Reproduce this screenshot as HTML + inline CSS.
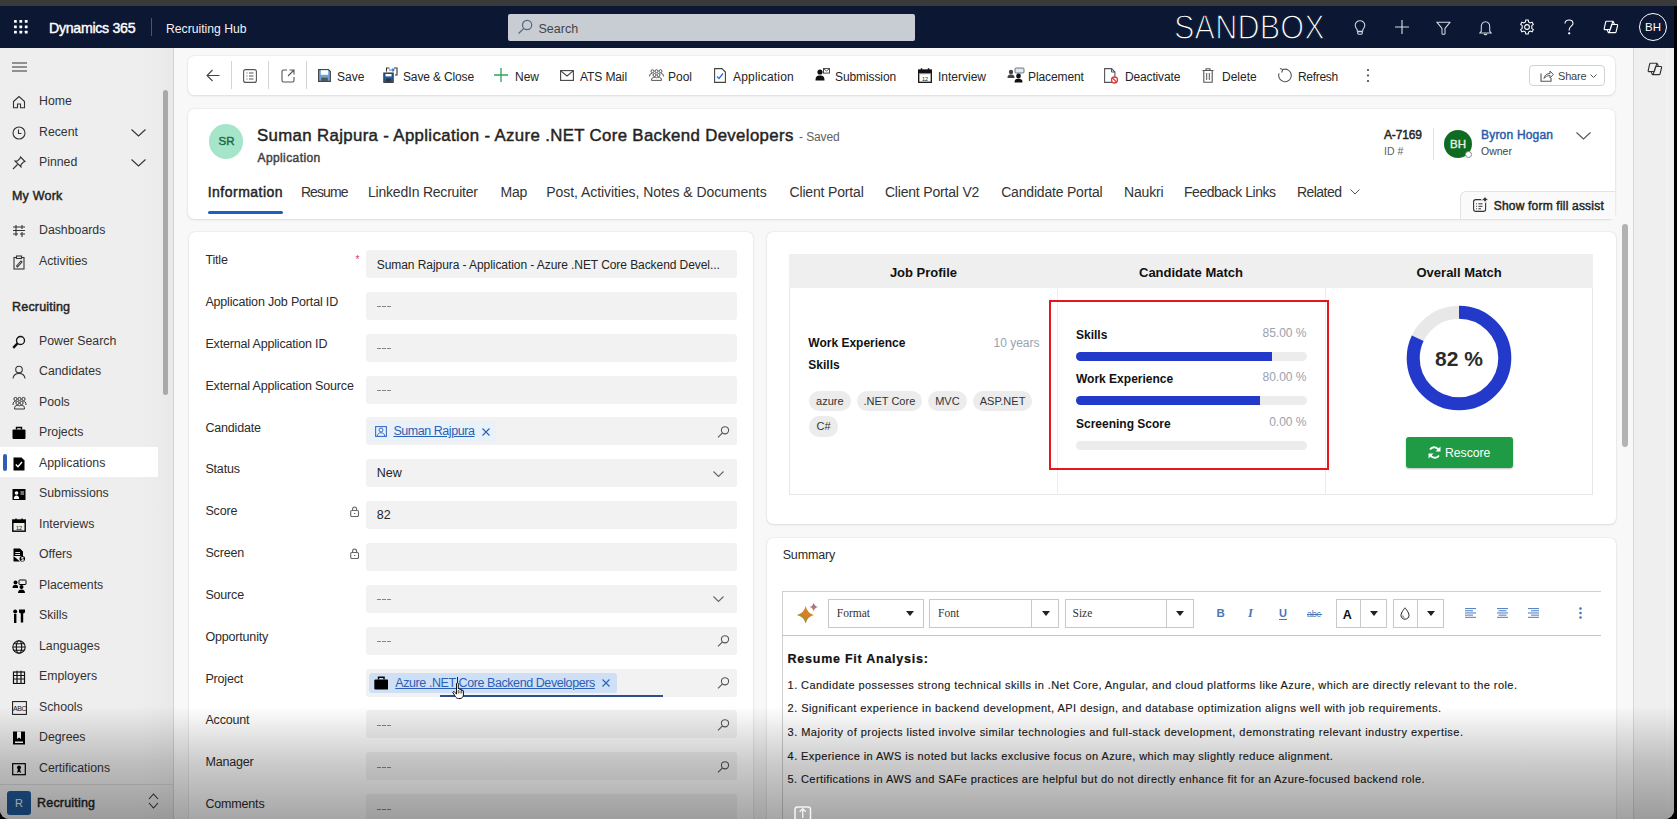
<!DOCTYPE html>
<html><head><meta charset="utf-8">
<style>
*{box-sizing:border-box;margin:0;padding:0}
html,body{width:1677px;height:819px;overflow:hidden;background:#000}
body{font-family:"Liberation Sans",sans-serif;color:#242424;position:relative}
.a{position:absolute;white-space:nowrap}
#screen{position:absolute;left:0;top:0;width:1674px;height:819px;background:#f8f8f8;overflow:hidden;border-radius:0 0 9px 9px}
#topstrip{position:absolute;left:0;top:0;width:1677px;height:6px;background:#3a3a3a}
#hdr{position:absolute;left:0;top:6px;width:1674px;height:42px;background:#0b1733}
#side{position:absolute;left:0;top:48px;width:174px;height:771px;background:linear-gradient(to right,#eeeeee 0,#eeeeee 140px,#e9e9e9 173px);border-right:1px solid #d2d2d2}
#rpanel{position:absolute;left:1633px;top:48px;width:41px;height:771px;background:#efefef;border-left:1px solid #d8d8d8}
.card{position:absolute;background:#fff;border-radius:6px;box-shadow:0 0 1.5px rgba(0,0,0,.16),0 1px 2.5px rgba(0,0,0,.08)}
#shade{position:absolute;left:0;top:0;width:1677px;height:819px;pointer-events:none;
 background:linear-gradient(to bottom,rgba(0,0,0,0) 0px,rgba(0,0,0,0) 706px,rgba(0,0,0,.10) 734px,rgba(0,0,0,.20) 762px,rgba(0,0,0,.35) 819px)}

</style></head><body>
<div id="screen">
<div id="hdr">
<svg class="a" style="left:13.6px;top:14.2px" width="14" height="14" viewBox="0 0 14 14" fill="#fff"><rect x="0" y="0" width="2.8" height="2.8" rx="0.4"/><rect x="5.4" y="0" width="2.8" height="2.8" rx="0.4"/><rect x="10.8" y="0" width="2.8" height="2.8" rx="0.4"/><rect x="0" y="5.4" width="2.8" height="2.8" rx="0.4"/><rect x="5.4" y="5.4" width="2.8" height="2.8" rx="0.4"/><rect x="10.8" y="5.4" width="2.8" height="2.8" rx="0.4"/><rect x="0" y="10.8" width="2.8" height="2.8" rx="0.4"/><rect x="5.4" y="10.8" width="2.8" height="2.8" rx="0.4"/><rect x="10.8" y="10.8" width="2.8" height="2.8" rx="0.4"/></svg>
<div class="a" style="left:49px;top:13.8px;font-size:14.2px;color:#fff;-webkit-text-stroke:0.4px #fff;letter-spacing:-0.3px">Dynamics 365</div>
<div class="a" style="left:151px;top:12px;width:1px;height:18px;background:#4a5570"></div>
<div class="a" style="left:166px;top:15.8px;font-size:12.2px;color:#f2f2f2">Recruiting Hub</div>
<div class="a" style="left:508px;top:8px;width:407px;height:27px;background:#c8ccd3;border-radius:2px"></div>
<svg class="a" style="left:517px;top:13px" width="16" height="16" viewBox="0 0 16 16" fill="none" stroke="#55647f" stroke-width="1.2"><circle cx="10.1" cy="6" r="4.6"/><path d="M6.8 9.3 L1.6 14.5"/></svg>
<div class="a" style="left:538.5px;top:15.5px;font-size:12.5px;color:#444">Search</div>
<div class="a" style="left:1173.5px;top:1.5px;font-size:34.6px;color:#fff;transform:scaleX(0.885);transform-origin:0 0;-webkit-text-stroke:1.3px #0b1733;letter-spacing:0.2px">SANDBOX</div>
<svg class="a" style="left:1354px;top:14px" width="12" height="15" viewBox="0 0 12 15" fill="none" stroke="#d6dae2" stroke-width="1.05"><path d="M6 0.8 C3.2 0.8 1.2 2.8 1.2 5.3 C1.2 7.4 2.6 8.6 3.3 10 V11.2 H8.7 V10 C9.4 8.6 10.8 7.4 10.8 5.3 C10.8 2.8 8.8 0.8 6 0.8Z"/><rect x="3.6" y="11.6" width="4.8" height="2.6" rx="1.2"/></svg>
<svg class="a" style="left:1395px;top:14.3px" width="14" height="14" viewBox="0 0 14 14" stroke="#d6dae2" stroke-width="1.15"><path d="M7 0 V14 M0 7 H14"/></svg>
<svg class="a" style="left:1436px;top:14.5px" width="15" height="14" viewBox="0 0 15 14" fill="none" stroke="#d6dae2" stroke-width="1.05" stroke-linejoin="round"><path d="M0.8 1.2 H14.2 L9 7.4 V12.6 Q9 13.3 8.3 13.3 H6.7 Q6 13.3 6 12.6 V7.4 Z"/></svg>
<svg class="a" style="left:1479px;top:14.5px" width="13" height="15" viewBox="0 0 13 15" fill="none" stroke="#d6dae2" stroke-width="1.05"><path d="M6.5 0.8 C4 0.8 2.3 2.8 2.3 5.4 V10.2 L0.8 12 H12.2 L10.7 10.2 V5.4 C10.7 2.8 9 0.8 6.5 0.8Z"/><path d="M5 12.8 C5.3 13.9 7.7 13.9 8 12.8"/></svg>
<svg class="a" style="left:1519px;top:13px" width="16" height="16" viewBox="0 0 16 16" fill="none" stroke="#fff" stroke-width="1.1"><circle cx="8" cy="8" r="2.4"/><path d="M6.8 1 H9.2 L9.6 3 L11.2 3.9 L13.1 3.2 L14.3 5.3 L12.8 6.7 V8.3 V9.3 L14.3 10.7 L13.1 12.8 L11.2 12.1 L9.6 13 L9.2 15 H6.8 L6.4 13 L4.8 12.1 L2.9 12.8 L1.7 10.7 L3.2 9.3 V6.7 L1.7 5.3 L2.9 3.2 L4.8 3.9 L6.4 3 Z"/></svg>
<svg class="a" style="left:1563px;top:13px" width="12" height="16" viewBox="0 0 12 16" fill="none" stroke="#fff" stroke-width="1.1"><path d="M2 4.5 C2 2.4 3.8 1 6 1 C8.2 1 10 2.4 10 4.5 C10 7 6.2 7.5 6.2 10.5 V11.5"/><circle cx="6.2" cy="14.3" r="0.6" fill="#fff"/></svg>
<svg class="a" style="left:1600px;top:9.8px" width="22" height="22" viewBox="0 0 22 22" fill="none" stroke="#fff" stroke-width="1.15" stroke-linejoin="round"><path d="M6.3 5.2 H13 L14.6 8.5 H17 Q17.8 8.7 17.6 9.6 L16 16 Q15.8 16.6 15 16.6 H8.3 L7.2 13.6 H4.8 Q4 13.5 4.2 12.6 L5.7 5.9 Q5.9 5.2 6.3 5.2Z M12.9 5.4 L10.3 13.5 H7.2 M14.6 8.5 H11.7 L9.1 16.5"/></svg>
<div class="a" style="left:1639px;top:7px;width:28px;height:28px;border:1.3px solid #fff;border-radius:50%;color:#fff;font-size:11.5px;text-align:center;line-height:26px">BH</div>
</div>
<div id="side">
<svg class="a" style="left:12px;top:14px" width="15" height="10" viewBox="0 0 15 10" stroke="#333" stroke-width="1.1"><path d="M0 1 H15 M0 5 H15 M0 9 H15"/></svg>
<div class="a" style="left:163px;top:42px;width:5px;height:305px;background:#a9a9a9;border-radius:3px"></div>
<div class="a" style="left:12px;top:47px"><svg width="14" height="14" viewBox="0 0 14 14" fill="none" stroke="#333" stroke-width="1.1"><path d="M1.5 6.5 L7 1.5 L12.5 6.5 V12.8 H8.5 V9 H5.5 V12.8 H1.5Z"/></svg></div>
<div class="a" style="left:39px;top:46px;font-size:12.3px;color:#333">Home</div>
<div class="a" style="left:12px;top:78px"><svg width="14" height="14" viewBox="0 0 14 14" fill="none" stroke="#333" stroke-width="1.1"><circle cx="7" cy="7" r="6"/><path d="M6.5 3.5 V7.5 H9.5"/></svg></div>
<div class="a" style="left:39px;top:77px;font-size:12.3px;color:#333">Recent</div>
<svg class="a" style="left:131px;top:81px" width="15" height="8" viewBox="0 0 15 8" fill="none" stroke="#333" stroke-width="1.1"><path d="M0.5 0.5 L7.5 7 L14.5 0.5"/></svg>
<div class="a" style="left:12px;top:108px"><svg width="14" height="14" viewBox="0 0 14 14" fill="none" stroke="#333" stroke-width="1.1"><path d="M8.5 1 L13 5.5 L11.5 6 L9 8.5 L9 11 L3 5 L5.5 5 L8 2.5Z M5.5 8.5 L1 13"/></svg></div>
<div class="a" style="left:39px;top:107px;font-size:12.3px;color:#333">Pinned</div>
<svg class="a" style="left:131px;top:111px" width="15" height="8" viewBox="0 0 15 8" fill="none" stroke="#333" stroke-width="1.1"><path d="M0.5 0.5 L7.5 7 L14.5 0.5"/></svg>
<div class="a" style="left:12px;top:141px;font-size:12.5px;-webkit-text-stroke:0.45px #242424;color:#242424;letter-spacing:0.2px">My Work</div>
<div class="a" style="left:12px;top:176px"><svg width="14" height="14" viewBox="0 0 14 14" fill="none" stroke="#333" stroke-width="1.1"><path d="M1 3 H13 M1 6.5 H13 M1 10 H6 M8 10 H13 M4 1 V12 M10 1 V5 M10 8 V13"/></svg></div>
<div class="a" style="left:39px;top:175px;font-size:12.3px;color:#333">Dashboards</div>
<div class="a" style="left:12px;top:207px"><svg width="14" height="15" viewBox="0 0 14 15" fill="none" stroke="#333" stroke-width="1.1"><rect x="2" y="2.5" width="10" height="11.5"/><rect x="4.5" y="1" width="5" height="2.5" fill="#eee"/><path d="M4.5 11 L9 6 L10 7 L5.5 12Z"/></svg></div>
<div class="a" style="left:39px;top:206px;font-size:12.3px;color:#333">Activities</div>
<div class="a" style="left:12px;top:252px;font-size:12.5px;-webkit-text-stroke:0.45px #242424;color:#242424;letter-spacing:0.2px">Recruiting</div>
<div class="a" style="left:12px;top:287px"><svg width="14" height="14" viewBox="0 0 14 14" fill="none" stroke="#111" stroke-width="1.3"><circle cx="8.5" cy="5.5" r="4"/><path d="M5.8 8.2 L1.2 12.8" stroke-width="2.4"/></svg></div>
<div class="a" style="left:39px;top:286px;font-size:12.3px;color:#333">Power Search</div>
<div class="a" style="left:12px;top:317px"><svg width="14" height="14" viewBox="0 0 14 14" fill="none" stroke="#333" stroke-width="1.1"><circle cx="7" cy="4.5" r="3.3"/><path d="M1 13.5 C1.5 9.5 4 8.5 7 8.5 C10 8.5 12.5 9.5 13 13.5"/></svg></div>
<div class="a" style="left:39px;top:316px;font-size:12.3px;color:#333">Candidates</div>
<div class="a" style="left:12px;top:348px"><svg width="15" height="14" viewBox="0 0 15 14" fill="none" stroke="#333" stroke-width="1"><circle cx="3.5" cy="3" r="1.6"/><circle cx="7.5" cy="3" r="1.6"/><circle cx="11.5" cy="3" r="1.6"/><circle cx="5.5" cy="7" r="1.6"/><circle cx="9.5" cy="7" r="1.6"/><path d="M1 9 C1 6 2 5.5 3.5 5.5 M14 9 C14 6 13 5.5 11.5 5.5 M2.5 13 C2.5 10 3.5 9.5 5.5 9.5 C7.5 9.5 7.5 10 7.5 10 C7.5 10 7.5 9.5 9.5 9.5 C11.5 9.5 12.5 10 12.5 13Z"/></svg></div>
<div class="a" style="left:39px;top:347px;font-size:12.3px;color:#333">Pools</div>
<div class="a" style="left:12px;top:378px"><svg width="14" height="14" viewBox="0 0 14 14"><path d="M4.5 3.5 V1.5 H9.5 V3.5" fill="none" stroke="#000" stroke-width="1.4"/><rect x="0.5" y="3.5" width="13" height="9.5" rx="1" fill="#000"/></svg></div>
<div class="a" style="left:39px;top:377px;font-size:12.3px;color:#333">Projects</div>
<div class="a" style="left:0;top:398.8px;width:158px;height:30.5px;background:#fff"></div>
<div class="a" style="left:3px;top:406px;width:3.5px;height:17px;background:#2f5fb3;border-radius:2px"></div>
<div class="a" style="left:12px;top:409px"><svg width="14" height="14" viewBox="0 0 14 14"><path d="M1.5 0.5 H9.5 L12.5 3.5 V13.5 H1.5Z" fill="#000"/><path d="M3.8 7.5 L6 9.8 L10 5" fill="none" stroke="#fff" stroke-width="1.4"/></svg></div>
<div class="a" style="left:39px;top:408px;font-size:12.3px;color:#333">Applications</div>
<div class="a" style="left:12px;top:439px"><svg width="14" height="13" viewBox="0 0 14 13"><rect x="0.5" y="1" width="13" height="11" fill="#000"/><circle cx="4.5" cy="5" r="1.8" fill="#fff"/><path d="M1.8 11 C2 8 3 7.5 4.5 7.5 C6 7.5 7 8 7.2 11Z" fill="#fff"/><path d="M8.5 4 H12 M8.5 6 H12" stroke="#fff" stroke-width="0.9"/></svg></div>
<div class="a" style="left:39px;top:438px;font-size:12.3px;color:#333">Submissions</div>
<div class="a" style="left:12px;top:470px"><svg width="14" height="14" viewBox="0 0 14 14"><rect x="0.8" y="2" width="12.4" height="11.2" fill="none" stroke="#000" stroke-width="1.4"/><rect x="0.8" y="2" width="12.4" height="3" fill="#000"/><path d="M4 0.5 V2.5 M10 0.5 V2.5" stroke="#000" stroke-width="1.4"/><text x="7" y="11.8" font-size="5.5" text-anchor="middle" font-family="Liberation Sans" fill="#000">12</text></svg></div>
<div class="a" style="left:39px;top:469px;font-size:12.3px;color:#333">Interviews</div>
<div class="a" style="left:12px;top:500px"><svg width="14" height="14" viewBox="0 0 14 14"><path d="M1.5 0.5 H8 L11 3.5 V8 H1.5Z M1.5 8 V13.5 H8" fill="#000"/><path d="M3.3 4.5 H8 M3.3 6.5 H8" stroke="#fff" stroke-width="0.9"/><circle cx="10.3" cy="10.8" r="2.8" fill="#000"/><text x="10.3" y="12.8" font-size="5" text-anchor="middle" font-family="Liberation Sans" font-weight="700" fill="#fff">$</text></svg></div>
<div class="a" style="left:39px;top:499px;font-size:12.3px;color:#333">Offers</div>
<div class="a" style="left:12px;top:531px"><svg width="15" height="14" viewBox="0 0 15 14" fill="#000"><circle cx="3.5" cy="3.5" r="2"/><path d="M0.5 9 C0.5 6.5 1.5 6 3.5 6 C5.5 6 6 6.5 6 7.5 V9Z"/><rect x="7" y="1" width="7" height="4.5" rx="0.5" fill="none" stroke="#000"/><circle cx="9.5" cy="8" r="2"/><path d="M6 14 C6 11.5 7.5 10.5 9.5 10.5 C11.5 10.5 13 11.5 13 14Z"/></svg></div>
<div class="a" style="left:39px;top:530px;font-size:12.3px;color:#333">Placements</div>
<div class="a" style="left:12px;top:561px"><svg width="14" height="14" viewBox="0 0 14 14" fill="#000"><rect x="2" y="5" width="2.4" height="9"/><circle cx="3.2" cy="2.5" r="2"/><path d="M7 0.5 H13 V3.5 L11.2 4.5 V13.5 H8.8 V4.5 L7 3.5Z"/></svg></div>
<div class="a" style="left:39px;top:560px;font-size:12.3px;color:#333">Skills</div>
<div class="a" style="left:12px;top:592px"><svg width="14" height="14" viewBox="0 0 14 14" fill="none" stroke="#111" stroke-width="1.1"><circle cx="7" cy="7" r="6.2"/><ellipse cx="7" cy="7" rx="2.7" ry="6.2"/><path d="M0.8 7 H13.2 M1.8 3.8 H12.2 M1.8 10.2 H12.2"/></svg></div>
<div class="a" style="left:39px;top:591px;font-size:12.3px;color:#333">Languages</div>
<div class="a" style="left:12px;top:622px"><svg width="14" height="14" viewBox="0 0 14 14" fill="none" stroke="#111" stroke-width="1.2"><rect x="1.5" y="2" width="11" height="11.5"/><path d="M5 0.8 V13.5 M9 0.8 V13.5 M1.5 5.5 H12.5 M1.5 9 H12.5"/></svg></div>
<div class="a" style="left:39px;top:621px;font-size:12.3px;color:#333">Employers</div>
<div class="a" style="left:12px;top:653px"><svg width="15" height="14" viewBox="0 0 15 14"><rect x="0.6" y="0.6" width="13.8" height="12.8" fill="none" stroke="#111" stroke-width="1"/><text x="7.5" y="9.8" font-size="7" text-anchor="middle" font-family="Liberation Sans" fill="#111" letter-spacing="-0.4">ABC</text></svg></div>
<div class="a" style="left:39px;top:652px;font-size:12.3px;color:#333">Schools</div>
<div class="a" style="left:12px;top:683px"><svg width="14" height="14" viewBox="0 0 14 14"><path d="M1 0.5 H13 V13.5 H1Z" fill="#000"/><path d="M5 0.5 V8 L7 6.5 L9 8 V0.5Z" fill="#fff"/><rect x="3" y="10.5" width="8" height="1.5" fill="#fff"/></svg></div>
<div class="a" style="left:39px;top:682px;font-size:12.3px;color:#333">Degrees</div>
<div class="a" style="left:12px;top:714px"><svg width="14" height="13" viewBox="0 0 14 13"><rect x="0.7" y="0.7" width="12.6" height="11" fill="none" stroke="#000" stroke-width="1.2"/><circle cx="7" cy="4.5" r="2" fill="#000"/><path d="M5 10 L6 6 H8 L9 10 L7 8.8Z" fill="#000"/></svg></div>
<div class="a" style="left:39px;top:713px;font-size:12.3px;color:#333">Certifications</div>
<div class="a" style="left:0;top:736px;width:173px;height:1px;background:#d6d6d6"></div>
<div class="a" style="left:7px;top:743px;width:24px;height:24px;background:#205a9a;border-radius:3px;color:#e8eef7;font-size:11px;text-align:center;line-height:24px">R</div>
<div class="a" style="left:37px;top:748px;font-size:12.5px;-webkit-text-stroke:0.45px #242424;color:#242424;letter-spacing:0.2px">Recruiting</div>
<svg class="a" style="left:148px;top:745px" width="11" height="16" viewBox="0 0 11 16" fill="none" stroke="#333" stroke-width="1.1"><path d="M1 6 L5.5 1 L10 6 M1 10 L5.5 15 L10 10"/></svg>
</div>
<div id="rpanel"></div>
<div class="card" style="left:188px;top:56px;width:1427px;height:39px"></div>
<svg class="a" style="left:206px;top:69px" width="14" height="13" viewBox="0 0 14 13"><path d="M13.5 6.5 H1.5 M6.5 1 L1 6.5 L6.5 12" fill="none" stroke="#444" stroke-width="1.1"/></svg>
<div class="a" style="left:231px;top:61px;width:1px;height:28px;background:#d4d4d4"></div>
<div class="a" style="left:268px;top:61px;width:1px;height:28px;background:#d4d4d4"></div>
<div class="a" style="left:306px;top:61px;width:1px;height:28px;background:#d4d4d4"></div>
<svg class="a" style="left:243px;top:69px" width="14" height="14" viewBox="0 0 14 14"><rect x="0.6" y="0.6" width="12.8" height="12.8" rx="2" fill="none" stroke="#555" stroke-width="1.1"/><path d="M3.5 4 H4.5 M6 4 H10.5 M3.5 7 H4.5 M6 7 H10.5 M3.5 10 H4.5 M6 10 H10.5" stroke="#555" stroke-width="1"/></svg>
<svg class="a" style="left:281px;top:69px" width="14" height="14" viewBox="0 0 14 14"><path d="M6 1 H2.5 C1.6 1 1 1.6 1 2.5 V11.5 C1 12.4 1.6 13 2.5 13 H11.5 C12.4 13 13 12.4 13 11.5 V8 M8.5 1 H13 V5.5 M13 1 L7 7" fill="none" stroke="#555" stroke-width="1.1"/></svg>
<svg class="a" style="left:318px;top:69px" width="13" height="13" viewBox="0 0 13 13"><path d="M0.6 0.6 H10.5 L12.4 2.5 V12.4 H0.6Z" fill="#6fa0d8" stroke="#444" stroke-width="1.1"/><rect x="2.8" y="1.2" width="7.4" height="4.6" fill="#fff"/><rect x="3.2" y="8.6" width="6.6" height="3.6" fill="#555"/></svg>
<div class="a" style="left:337px;top:69.96px;font-size:12px;color:#242424;font-weight:400;">Save</div>
<svg class="a" style="left:383px;top:67px" width="15" height="16" viewBox="0 0 15 16"><path d="M3.5 4.5 V1 H6.5 M11 1 H14 V8 H12" fill="none" stroke="#333" stroke-width="1.1"/><path d="M6 3 H11 M9.5 1.5 L11 3 L9.5 4.5" fill="none" stroke="#2f6fd0" stroke-width="1.1"/><rect x="0.8" y="6" width="9.4" height="9.4" fill="#1f5fa8" stroke="#333" stroke-width="1"/><rect x="2.5" y="7" width="6" height="2.4" fill="#fff"/><rect x="2.8" y="11.6" width="5.4" height="3" fill="#333"/></svg>
<div class="a" style="left:403px;top:69.96px;font-size:12px;color:#242424;font-weight:400;letter-spacing:-0.15px">Save &amp; Close</div>
<svg class="a" style="left:494px;top:68px" width="14" height="14" viewBox="0 0 14 14"><path d="M7 0 V14 M0 7 H14" stroke="#2aa55a" stroke-width="1.3"/></svg>
<div class="a" style="left:515px;top:69.96px;font-size:12px;color:#242424;font-weight:400;">New</div>
<svg class="a" style="left:560px;top:70px" width="14" height="11" viewBox="0 0 14 11"><rect x="0.6" y="0.6" width="12.8" height="9.8" fill="none" stroke="#444" stroke-width="1.1"/><path d="M0.8 0.8 L7 6 L13.2 0.8" fill="none" stroke="#444" stroke-width="1.1"/></svg>
<div class="a" style="left:580px;top:69.96px;font-size:12px;color:#242424;font-weight:400;letter-spacing:-0.1px">ATS Mail</div>
<svg class="a" style="left:649px;top:69px" width="15" height="12" viewBox="0 0 15 12"><g fill="none" stroke="#444" stroke-width="0.9"><circle cx="3.5" cy="2.2" r="1.5"/><circle cx="7.5" cy="2.2" r="1.5"/><circle cx="11.5" cy="2.2" r="1.5"/><path d="M0.6 7.5 C0.6 5 1.5 4.5 3.2 4.5 M14.4 7.5 C14.4 5 13.5 4.5 11.8 4.5"/><circle cx="5.5" cy="6" r="1.5"/><circle cx="9.5" cy="6" r="1.5"/><path d="M2.5 11.4 C2.5 9 3.5 8.3 5.5 8.3 C6.8 8.3 7.5 8.8 7.5 8.8 C7.5 8.8 8.2 8.3 9.5 8.3 C11.5 8.3 12.5 9 12.5 11.4Z"/></g></svg>
<div class="a" style="left:668px;top:69.96px;font-size:12px;color:#242424;font-weight:400;">Pool</div>
<svg class="a" style="left:714px;top:68px" width="12" height="15" viewBox="0 0 12 15"><path d="M0.6 0.6 H8 L11.4 4 V14.4 H0.6Z" fill="#fff" stroke="#444" stroke-width="1.1"/><path d="M3 8.5 L5 10.5 L9 5.5" fill="none" stroke="#2f6fd0" stroke-width="1.3"/></svg>
<div class="a" style="left:733px;top:69.96px;font-size:12px;color:#242424;font-weight:400;letter-spacing:0.2px">Application</div>
<svg class="a" style="left:815px;top:68px" width="15" height="13" viewBox="0 0 15 13"><circle cx="5" cy="4" r="2.6" fill="#111"/><path d="M0.5 12.5 C0.5 8.5 2 7.5 5 7.5 C8 7.5 9.5 8.5 9.5 12.5Z" fill="#111"/><rect x="8.5" y="0.6" width="6" height="4.5" fill="#fff" stroke="#333" stroke-width="0.9"/><path d="M8.7 0.9 L11.5 3 L14.3 0.9" fill="none" stroke="#333" stroke-width="0.8"/></svg>
<div class="a" style="left:835px;top:69.96px;font-size:12px;color:#242424;font-weight:400;letter-spacing:-0.1px">Submission</div>
<svg class="a" style="left:918px;top:68px" width="14" height="15" viewBox="0 0 14 15"><rect x="0.7" y="2" width="12.6" height="12.3" fill="#fff" stroke="#111" stroke-width="1.3"/><rect x="0.7" y="2" width="12.6" height="3.2" fill="#111"/><rect x="2" y="5.2" width="10" height="1" fill="#4a86d0"/><path d="M3.5 0.3 V3 M10.5 0.3 V3" stroke="#111" stroke-width="1.4"/><text x="7" y="12.6" font-size="5.5" text-anchor="middle" font-family="Liberation Sans" fill="#111">12</text></svg>
<div class="a" style="left:938px;top:69.96px;font-size:12px;color:#242424;font-weight:400;">Interview</div>
<svg class="a" style="left:1007px;top:67px" width="20" height="16" viewBox="0 0 20 16"><circle cx="4" cy="5" r="2.2" fill="#444"/><path d="M0.5 11 C0.5 8 2 7.5 4 7.5 C6 7.5 7.5 8 7.5 11Z" fill="#444"/><rect x="8" y="1" width="9" height="5" rx="1" fill="#dbe9f8" stroke="#555" stroke-width="0.8"/><circle cx="11.5" cy="9" r="2.4" fill="#111"/><path d="M7.5 15.5 C7.5 12.5 9 11.8 11.5 11.8 C14 11.8 15.5 12.5 15.5 15.5Z" fill="#111"/></svg>
<div class="a" style="left:1028px;top:69.96px;font-size:12px;color:#242424;font-weight:400;letter-spacing:-0.1px">Placement</div>
<svg class="a" style="left:1104px;top:68px" width="15" height="16" viewBox="0 0 15 16"><path d="M0.6 0.6 H7.5 L10.9 4 V14.4 H0.6Z" fill="#fff" stroke="#555" stroke-width="1.1"/><path d="M7.5 0.6 V4 H10.9" fill="none" stroke="#555" stroke-width="1"/><circle cx="10.5" cy="12" r="3" fill="#fff" stroke="#e03a3a" stroke-width="1.3"/><path d="M8.6 10 L12.4 14" stroke="#e03a3a" stroke-width="1.2"/></svg>
<div class="a" style="left:1125px;top:69.96px;font-size:12px;color:#242424;font-weight:400;letter-spacing:-0.15px">Deactivate</div>
<svg class="a" style="left:1202px;top:68px" width="12" height="15" viewBox="0 0 12 15"><path d="M0.5 2.5 H11.5 M4 2.5 V0.8 H8 V2.5" fill="none" stroke="#555" stroke-width="1.1"/><path d="M1.8 2.5 V14.2 H10.2 V2.5" fill="none" stroke="#555" stroke-width="1.1"/><path d="M4.6 5 V12 M7.4 5 V12" stroke="#777" stroke-width="1.3"/></svg>
<div class="a" style="left:1222px;top:69.96px;font-size:12px;color:#242424;font-weight:400;">Delete</div>
<svg class="a" style="left:1277px;top:68px" width="15" height="15" viewBox="0 0 15 15"><path d="M5.85 1.58 A6.3 6.3 0 1 1 2.08 5.35" fill="none" stroke="#555" stroke-width="1.1"/><path d="M2.9 0.6 L5.85 1.58 L4.6 4.5" fill="none" stroke="#555" stroke-width="1.1"/></svg>
<div class="a" style="left:1298px;top:69.96px;font-size:12px;color:#242424;font-weight:400;letter-spacing:-0.3px">Refresh</div>
<svg class="a" style="left:1366px;top:68px" width="4" height="15" viewBox="0 0 4 15"><circle cx="2" cy="2" r="1.1" fill="#444"/><circle cx="2" cy="7.5" r="1.1" fill="#444"/><circle cx="2" cy="13" r="1.1" fill="#444"/></svg>
<div class="a" style="left:1529px;top:65px;width:76px;height:21px;border:1px solid #d2d2d2;border-radius:4px;background:#fff"></div>
<svg class="a" style="left:1540px;top:69px" width="14" height="13" viewBox="0 0 14 13"><path d="M1 4.5 V12.2 H11 V9" fill="none" stroke="#555" stroke-width="1.1"/><path d="M4 9.5 C4.5 6 7 4.5 10 4.5 V2 L13.3 5.5 L10 9 V6.5 C7.5 6.5 5.5 7.5 4 9.5Z" fill="none" stroke="#555" stroke-width="1"/></svg>
<div class="a" style="left:1558px;top:69.88px;font-size:11px;color:#424242;font-weight:400;letter-spacing:-0.2px">Share</div>
<svg class="a" style="left:1590px;top:74px" width="7" height="4" viewBox="0 0 7 4"><path d="M0.5 0.5 L3.5 3.5 L6.5 0.5" fill="none" stroke="#555" stroke-width="1"/></svg>
<div class="card" style="left:188px;top:109px;width:1427px;height:110px"></div>
<div class="a" style="left:208.5px;top:124px;width:34.5px;height:34.5px;border-radius:50%;background:#a5e5c9"></div>
<div class="a" style="left:218.5px;top:135.42px;font-size:11.5px;color:#1d6b47;font-weight:400;-webkit-text-stroke:0.45px currentColor;">SR</div>
<div class="a" style="left:257px;top:126.24px;font-size:16.8px;color:#242424;font-weight:400;-webkit-text-stroke:0.45px currentColor;letter-spacing:0.36px">Suman Rajpura - Application - Azure .NET Core Backend Developers</div>
<div class="a" style="left:799px;top:129.96px;font-size:12px;color:#616161;font-weight:400;letter-spacing:-0.1px">- Saved</div>
<div class="a" style="left:257.5px;top:151.26px;font-size:12px;color:#424242;font-weight:400;-webkit-text-stroke:0.45px currentColor;letter-spacing:0.4px">Application</div>
<div class="a" style="left:207.7px;top:183.82px;font-size:14px;color:#242424;font-weight:400;-webkit-text-stroke:0.45px currentColor;letter-spacing:0.485px">Information</div>
<div class="a" style="left:300.9px;top:183.82px;font-size:14px;color:#333;font-weight:400;letter-spacing:-0.908px">Resume</div>
<div class="a" style="left:368px;top:183.82px;font-size:14px;color:#333;font-weight:400;letter-spacing:-0.213px">LinkedIn Recruiter</div>
<div class="a" style="left:500.4px;top:183.82px;font-size:14px;color:#333;font-weight:400;letter-spacing:-0.115px">Map</div>
<div class="a" style="left:546.3px;top:183.82px;font-size:14px;color:#333;font-weight:400;letter-spacing:-0.063px">Post, Activities, Notes &amp; Documents</div>
<div class="a" style="left:789.5px;top:183.82px;font-size:14px;color:#333;font-weight:400;letter-spacing:-0.164px">Client Portal</div>
<div class="a" style="left:884.9px;top:183.82px;font-size:14px;color:#333;font-weight:400;letter-spacing:-0.185px">Client Portal V2</div>
<div class="a" style="left:1001.2px;top:183.82px;font-size:14px;color:#333;font-weight:400;letter-spacing:-0.193px">Candidate Portal</div>
<div class="a" style="left:1124px;top:183.82px;font-size:14px;color:#333;font-weight:400;letter-spacing:-0.154px">Naukri</div>
<div class="a" style="left:1184px;top:183.82px;font-size:14px;color:#333;font-weight:400;letter-spacing:-0.466px">Feedback Links</div>
<div class="a" style="left:1297px;top:183.82px;font-size:14px;color:#333;font-weight:400;letter-spacing:-0.545px">Related</div>
<svg class="a" style="left:1350px;top:189px" width="10" height="6" viewBox="0 0 10 6"><path d="M0.5 0.5 L5 5 L9.5 0.5" fill="none" stroke="#555" stroke-width="1"/></svg>
<div class="a" style="left:207.5px;top:211px;width:75px;height:3px;border-radius:2px;background:#1f5fc0"></div>
<div class="a" style="left:1384px;top:127.96px;font-size:12px;color:#242424;font-weight:400;-webkit-text-stroke:0.45px currentColor;letter-spacing:-0.15px">A-7169</div>
<div class="a" style="left:1384px;top:144.84px;font-size:10.5px;color:#616161;font-weight:400;">ID #</div>
<div class="a" style="left:1432.5px;top:128px;width:1px;height:32px;background:#e0e0e0"></div>
<div class="a" style="left:1444px;top:130px;width:28px;height:28px;border-radius:50%;background:#0f6b21;color:#e2f2e2;font-size:11.5px;-webkit-text-stroke:0.4px #e2f2e2;text-align:center;line-height:29px;letter-spacing:0px">BH</div>
<div class="a" style="left:1464.5px;top:151px;width:7px;height:7px;border-radius:50%;background:#fff;border:1px solid #888"></div>
<div class="a" style="left:1481px;top:127.96px;font-size:12px;color:#2a5cab;font-weight:400;-webkit-text-stroke:0.45px currentColor;letter-spacing:0.2px">Byron Hogan</div>
<div class="a" style="left:1481px;top:145.14px;font-size:10.5px;color:#424242;font-weight:400;">Owner</div>
<svg class="a" style="left:1576px;top:132px" width="15" height="8" viewBox="0 0 15 8"><path d="M0.5 0.5 L7.5 7 L14.5 0.5" fill="none" stroke="#555" stroke-width="1.1"/></svg>
<div class="a" style="left:1460px;top:191px;width:155px;height:28px;border:1px solid #e3e3e3;border-right:none;border-bottom:none;border-radius:6px 0 0 0;background:#fafafa"></div>
<svg class="a" style="left:1472.5px;top:196px" width="16" height="16" viewBox="0 0 16 16"><rect x="0.6" y="3.6" width="12" height="11.8" rx="2.2" fill="none" stroke="#333" stroke-width="1.1"/><path d="M3 7.8 H3.9 M5.4 7.8 H9.5 M3 10.3 H3.9 M5.4 10.3 H9.5 M3 12.8 H3.9 M5.4 12.8 H8" stroke="#333" stroke-width="1"/><path d="M12 -0.2 Q12.6 2.8 15.6 3.4 Q12.6 4 12 7 Q11.4 4 8.4 3.4 Q11.4 2.8 12 -0.2Z" fill="#333" stroke="#fafafa" stroke-width="1"/></svg>
<div class="a" style="left:1493.7px;top:198.66px;font-size:12px;color:#242424;font-weight:400;-webkit-text-stroke:0.45px currentColor;letter-spacing:0.2px">Show form fill assist</div>
<div class="card" style="left:188.5px;top:232px;width:564.5px;height:620px"></div>
<div class="a" style="left:205.4px;top:253.1px;font-size:12.5px;color:#2b2b2b;font-weight:400;letter-spacing:-0.17px">Title</div>
<div class="a" style="left:365.5px;top:250.00px;width:371px;height:28px;border-radius:3px;background:#f2f2f2"></div>
<div class="a" style="left:355.6px;top:253.8px;font-size:10px;color:#d13c5a;font-weight:400;">*</div>
<div class="a" style="left:376.8px;top:258.06px;font-size:12px;color:#242424;font-weight:400;letter-spacing:-0.07px">Suman Rajpura - Application - Azure .NET Core Backend Devel...</div>
<div class="a" style="left:205.4px;top:294.95px;font-size:12.5px;color:#2b2b2b;font-weight:400;letter-spacing:-0.17px">Application Job Portal ID</div>
<div class="a" style="left:365.5px;top:291.85px;width:371px;height:28px;border-radius:3px;background:#f2f2f2"></div>
<div class="a" style="left:377px;top:306px;width:14px;height:1px;background-image:linear-gradient(to right,#858585 0,#858585 4px,transparent 4px,transparent 5px,#858585 5px,#858585 9px,transparent 9px,transparent 10px,#858585 10px,#858585 14px)"></div>
<div class="a" style="left:205.4px;top:336.8px;font-size:12.5px;color:#2b2b2b;font-weight:400;letter-spacing:-0.17px">External Application ID</div>
<div class="a" style="left:365.5px;top:333.70px;width:371px;height:28px;border-radius:3px;background:#f2f2f2"></div>
<div class="a" style="left:377px;top:348px;width:14px;height:1px;background-image:linear-gradient(to right,#858585 0,#858585 4px,transparent 4px,transparent 5px,#858585 5px,#858585 9px,transparent 9px,transparent 10px,#858585 10px,#858585 14px)"></div>
<div class="a" style="left:205.4px;top:378.65px;font-size:12.5px;color:#2b2b2b;font-weight:400;letter-spacing:-0.17px">External Application Source</div>
<div class="a" style="left:365.5px;top:375.55px;width:371px;height:28px;border-radius:3px;background:#f2f2f2"></div>
<div class="a" style="left:377px;top:390px;width:14px;height:1px;background-image:linear-gradient(to right,#858585 0,#858585 4px,transparent 4px,transparent 5px,#858585 5px,#858585 9px,transparent 9px,transparent 10px,#858585 10px,#858585 14px)"></div>
<div class="a" style="left:205.4px;top:420.5px;font-size:12.5px;color:#2b2b2b;font-weight:400;letter-spacing:-0.17px">Candidate</div>
<div class="a" style="left:365.5px;top:417.40px;width:371px;height:28px;border-radius:3px;background:#f2f2f2"></div>
<div class="a" style="left:369px;top:420.60px;width:126.5px;height:21px;border-radius:3px;background:#e9f1fb"></div>
<svg class="a" style="left:374.5px;top:426.09999999999997px" width="12" height="11" viewBox="0 0 12 11"><rect x="0.6" y="0.6" width="10.8" height="9.8" fill="none" stroke="#3b6fc4" stroke-width="1.1"/><circle cx="6" cy="4" r="2" fill="none" stroke="#3b6fc4" stroke-width="1"/><path d="M2.2 10.4 C2.5 7.5 4 6.8 6 6.8 C8 6.8 9.5 7.5 9.8 10.4" fill="none" stroke="#3b6fc4" stroke-width="1"/></svg>
<div class="a" style="left:393.4px;top:424.2px;font-size:12.5px;color:#2b5fb4;font-weight:400;text-decoration:underline;text-underline-offset:1px;letter-spacing:-0.45px">Suman Rajpura</div>
<svg class="a" style="left:482px;top:427.7px" width="8" height="8" viewBox="0 0 8 8"><path d="M0.5 0.5 L7.5 7.5 M7.5 0.5 L0.5 7.5" stroke="#2b5fb4" stroke-width="1.1"/></svg>
<svg class="a" style="left:717px;top:425.9px" width="13" height="12" viewBox="0 0 13 12"><circle cx="8" cy="4.3" r="3.6" fill="none" stroke="#555" stroke-width="1.1"/><path d="M5.5 6.8 L1 11.3" stroke="#555" stroke-width="1.1"/></svg>
<div class="a" style="left:205.4px;top:462.35px;font-size:12.5px;color:#2b2b2b;font-weight:400;letter-spacing:-0.17px">Status</div>
<div class="a" style="left:365.5px;top:459.25px;width:371px;height:28px;border-radius:3px;background:#f2f2f2"></div>
<div class="a" style="left:376.8px;top:465.85px;font-size:12.5px;color:#242424;font-weight:400;">New</div>
<svg class="a" style="left:712.5px;top:470.75px" width="11" height="6" viewBox="0 0 11 6"><path d="M0.5 0.5 L5.5 5.5 L10.5 0.5" fill="none" stroke="#666" stroke-width="1.1"/></svg>
<div class="a" style="left:205.4px;top:504.2px;font-size:12.5px;color:#2b2b2b;font-weight:400;letter-spacing:-0.17px">Score</div>
<div class="a" style="left:365.5px;top:501.10px;width:371px;height:28px;border-radius:3px;background:#f2f2f2"></div>
<div class="a" style="left:376.8px;top:508.4px;font-size:12.5px;color:#242424;font-weight:400;">82</div>
<svg class="a" style="left:350px;top:506.1px" width="9.5" height="11" viewBox="0 0 9.5 11"><path d="M2.6 4.5 V3.2 C2.6 1.8 3.4 1 4.6 1 C5.8 1 6.6 1.8 6.6 3.2 V4.5" fill="none" stroke="#666" stroke-width="1.1"/><rect x="0.7" y="4.5" width="7.8" height="6" rx="1.2" fill="#fff" stroke="#666" stroke-width="1.1"/><rect x="4" y="7" width="1.3" height="1" fill="#666"/></svg>
<div class="a" style="left:205.4px;top:546.05px;font-size:12.5px;color:#2b2b2b;font-weight:400;letter-spacing:-0.17px">Screen</div>
<div class="a" style="left:365.5px;top:542.95px;width:371px;height:28px;border-radius:3px;background:#f2f2f2"></div>
<svg class="a" style="left:350px;top:547.95px" width="9.5" height="11" viewBox="0 0 9.5 11"><path d="M2.6 4.5 V3.2 C2.6 1.8 3.4 1 4.6 1 C5.8 1 6.6 1.8 6.6 3.2 V4.5" fill="none" stroke="#666" stroke-width="1.1"/><rect x="0.7" y="4.5" width="7.8" height="6" rx="1.2" fill="#fff" stroke="#666" stroke-width="1.1"/><rect x="4" y="7" width="1.3" height="1" fill="#666"/></svg>
<div class="a" style="left:205.4px;top:587.9px;font-size:12.5px;color:#2b2b2b;font-weight:400;letter-spacing:-0.17px">Source</div>
<div class="a" style="left:365.5px;top:584.80px;width:371px;height:28px;border-radius:3px;background:#f2f2f2"></div>
<div class="a" style="left:377px;top:599px;width:14px;height:1px;background-image:linear-gradient(to right,#858585 0,#858585 4px,transparent 4px,transparent 5px,#858585 5px,#858585 9px,transparent 9px,transparent 10px,#858585 10px,#858585 14px)"></div>
<svg class="a" style="left:712.5px;top:596.3px" width="11" height="6" viewBox="0 0 11 6"><path d="M0.5 0.5 L5.5 5.5 L10.5 0.5" fill="none" stroke="#666" stroke-width="1.1"/></svg>
<div class="a" style="left:205.4px;top:629.75px;font-size:12.5px;color:#2b2b2b;font-weight:400;letter-spacing:-0.17px">Opportunity</div>
<div class="a" style="left:365.5px;top:626.65px;width:371px;height:28px;border-radius:3px;background:#f2f2f2"></div>
<div class="a" style="left:377px;top:641px;width:14px;height:1px;background-image:linear-gradient(to right,#858585 0,#858585 4px,transparent 4px,transparent 5px,#858585 5px,#858585 9px,transparent 9px,transparent 10px,#858585 10px,#858585 14px)"></div>
<svg class="a" style="left:717px;top:635.1500000000001px" width="13" height="12" viewBox="0 0 13 12"><circle cx="8" cy="4.3" r="3.6" fill="none" stroke="#555" stroke-width="1.1"/><path d="M5.5 6.8 L1 11.3" stroke="#555" stroke-width="1.1"/></svg>
<div class="a" style="left:205.4px;top:671.6px;font-size:12.5px;color:#2b2b2b;font-weight:400;letter-spacing:-0.17px">Project</div>
<div class="a" style="left:365.5px;top:668.50px;width:371px;height:28px;border-radius:3px;background:#f2f2f2"></div>
<div class="a" style="left:369px;top:672.50px;width:247.5px;height:20px;border-radius:3px;background:#cfe0f6"></div>
<svg class="a" style="left:373.8px;top:676.0px" width="14.5" height="13.5" viewBox="0 0 14.5 13.5"><path d="M4.5 3.5 V1.2 H10 V3.5" fill="none" stroke="#000" stroke-width="1.5"/><rect x="0.3" y="3.5" width="14" height="10" rx="1.2" fill="#000"/></svg>
<div class="a" style="left:395.3px;top:675.5px;font-size:12.5px;color:#2b5fb4;font-weight:400;text-decoration:underline;text-underline-offset:1px;letter-spacing:-0.42px">Azure .NET Core Backend Developers</div>
<svg class="a" style="left:602px;top:679.0px" width="8" height="8" viewBox="0 0 8 8"><path d="M0.5 0.5 L7.5 7.5 M7.5 0.5 L0.5 7.5" stroke="#2b5fb4" stroke-width="1.1"/></svg>
<svg class="a" style="left:717px;top:677.0px" width="13" height="12" viewBox="0 0 13 12"><circle cx="8" cy="4.3" r="3.6" fill="none" stroke="#555" stroke-width="1.1"/><path d="M5.5 6.8 L1 11.3" stroke="#555" stroke-width="1.1"/></svg>
<div class="a" style="left:440px;top:694.80px;width:223px;height:1.8px;background:#2f4f8a"></div>
<div class="a" style="left:457px;top:676.50px;width:1px;height:14px;background:#222"></div>
<svg class="a" style="left:452px;top:681.5px" width="14" height="18" viewBox="0 0 14 18"><path d="M4.5 1.5 C4.5 0.6 6.3 0.6 6.3 1.5 V7 C6.3 6 8 6 8 7 V8 C8 7 9.7 7 9.7 8 V9 C9.7 8 11.4 8 11.4 9 V13 C11.4 15 10 16.5 8 16.5 H6.5 C5 16.5 4.2 15.8 3.5 14.8 L1 10.8 C0.5 10 1.5 9.2 2.3 9.9 L4.5 12 Z" fill="#fff" stroke="#111" stroke-width="1"/><path d="M6.3 8 V11.5 M8 8.5 V11.5 M9.7 9 V11.5" stroke="#111" stroke-width="0.7"/></svg>
<div class="a" style="left:205.4px;top:713.45px;font-size:12.5px;color:#2b2b2b;font-weight:400;letter-spacing:-0.17px">Account</div>
<div class="a" style="left:365.5px;top:710.35px;width:371px;height:28px;border-radius:3px;background:#f2f2f2"></div>
<div class="a" style="left:377px;top:725px;width:14px;height:1px;background-image:linear-gradient(to right,#858585 0,#858585 4px,transparent 4px,transparent 5px,#858585 5px,#858585 9px,transparent 9px,transparent 10px,#858585 10px,#858585 14px)"></div>
<svg class="a" style="left:717px;top:718.85px" width="13" height="12" viewBox="0 0 13 12"><circle cx="8" cy="4.3" r="3.6" fill="none" stroke="#555" stroke-width="1.1"/><path d="M5.5 6.8 L1 11.3" stroke="#555" stroke-width="1.1"/></svg>
<div class="a" style="left:205.4px;top:755.3px;font-size:12.5px;color:#2b2b2b;font-weight:400;letter-spacing:-0.17px">Manager</div>
<div class="a" style="left:365.5px;top:752.20px;width:371px;height:28px;border-radius:3px;background:#f2f2f2"></div>
<div class="a" style="left:377px;top:767px;width:14px;height:1px;background-image:linear-gradient(to right,#858585 0,#858585 4px,transparent 4px,transparent 5px,#858585 5px,#858585 9px,transparent 9px,transparent 10px,#858585 10px,#858585 14px)"></div>
<svg class="a" style="left:717px;top:760.7px" width="13" height="12" viewBox="0 0 13 12"><circle cx="8" cy="4.3" r="3.6" fill="none" stroke="#555" stroke-width="1.1"/><path d="M5.5 6.8 L1 11.3" stroke="#555" stroke-width="1.1"/></svg>
<div class="a" style="left:205.4px;top:797.15px;font-size:12.5px;color:#2b2b2b;font-weight:400;letter-spacing:-0.17px">Comments</div>
<div class="a" style="left:365.5px;top:794.05px;width:371px;height:28px;border-radius:3px;background:#f2f2f2"></div>
<div class="a" style="left:377px;top:809px;width:14px;height:1px;background-image:linear-gradient(to right,#858585 0,#858585 4px,transparent 4px,transparent 5px,#858585 5px,#858585 9px,transparent 9px,transparent 10px,#858585 10px,#858585 14px)"></div>
<div class="card" style="left:767px;top:232px;width:848.5px;height:292px"></div>
<div class="a" style="left:789px;top:254px;width:804px;height:241px;border:1px solid #e6e6e6;border-top:none;background:#fff"></div>
<div class="a" style="left:789px;top:254px;width:804px;height:33.5px;background:#efefef"></div>
<div class="a" style="left:1057px;top:287.5px;width:1px;height:207px;background:#ececec"></div>
<div class="a" style="left:1325px;top:287.5px;width:1px;height:207px;background:#ececec"></div>
<div class="a" style="left:889.9px;top:264.74px;font-size:13px;color:#111;font-weight:700;">Job Profile</div>
<div class="a" style="left:1139px;top:264.74px;font-size:13px;color:#111;font-weight:700;">Candidate Match</div>
<div class="a" style="left:1416.5px;top:264.74px;font-size:13px;color:#111;font-weight:700;">Overall Match</div>
<div class="a" style="left:808.3px;top:335.56px;font-size:12px;color:#111;font-weight:700;">Work Experience</div>
<div class="a" style="left:993.5px;top:335.56px;font-size:12px;color:#98a2b0;font-weight:400;">10 years</div>
<div class="a" style="left:808.3px;top:357.76px;font-size:12px;color:#111;font-weight:700;">Skills</div>
<div class="a" style="left:808.5px;top:390.9px;width:42.7px;height:20.5px;border-radius:10px;background:#ececec;font-size:11px;color:#333;text-align:center;line-height:21px">azure</div>
<div class="a" style="left:856.8px;top:390.9px;width:65.2px;height:20.5px;border-radius:10px;background:#ececec;font-size:11px;color:#333;text-align:center;line-height:21px">.NET Core</div>
<div class="a" style="left:927.7px;top:390.9px;width:39.4px;height:20.5px;border-radius:10px;background:#ececec;font-size:11px;color:#333;text-align:center;line-height:21px">MVC</div>
<div class="a" style="left:972.8px;top:390.9px;width:59.5px;height:20.5px;border-radius:10px;background:#ececec;font-size:11px;color:#333;text-align:center;line-height:21px">ASP.NET</div>
<div class="a" style="left:809px;top:416.3px;width:29.3px;height:20.5px;border-radius:10px;background:#ececec;font-size:11px;color:#333;text-align:center;line-height:21px">C#</div>
<div class="a" style="left:1048.5px;top:299.7px;width:280.5px;height:170px;border:2.3px solid #e5161e"></div>
<div class="a" style="left:1076px;top:327.66px;font-size:12px;color:#111;font-weight:700;">Skills</div>
<div class="a" style="left:1076px;top:325.9px;width:230.5px;text-align:right;font-size:12px;color:#98a2b0">85.00 %</div>
<div class="a" style="left:1076px;top:351.5px;width:230.5px;height:9px;border-radius:4.5px;background:#ececec;overflow:hidden"><div style="width:196.0px;height:9px;background:#2339c9"></div></div>
<div class="a" style="left:1076px;top:371.76px;font-size:12px;color:#111;font-weight:700;">Work Experience</div>
<div class="a" style="left:1076px;top:370.0px;width:230.5px;text-align:right;font-size:12px;color:#98a2b0">80.00 %</div>
<div class="a" style="left:1076px;top:396.3px;width:230.5px;height:9px;border-radius:4.5px;background:#ececec;overflow:hidden"><div style="width:184.4px;height:9px;background:#2339c9"></div></div>
<div class="a" style="left:1076px;top:416.96px;font-size:12px;color:#111;font-weight:700;">Screening Score</div>
<div class="a" style="left:1076px;top:414.8px;width:230.5px;text-align:right;font-size:12px;color:#98a2b0">0.00 %</div>
<div class="a" style="left:1076px;top:440.8px;width:230.5px;height:9px;border-radius:4.5px;background:#ececec;overflow:hidden"></div>
<svg class="a" style="left:1405.4px;top:304px" width="108" height="108" viewBox="0 0 108 108"><circle cx="54" cy="54" r="45.8" fill="none" stroke="#e8e8e8" stroke-width="13"/><circle cx="54" cy="54" r="45.8" fill="none" stroke="#2339c9" stroke-width="13" stroke-dasharray="235.97 287.77" transform="rotate(-90 54 54)"/></svg>
<div class="a" style="left:1435px;top:347.08px;font-size:21px;color:#2b2b2b;font-weight:700;">82 %</div>
<div class="a" style="left:1405.7px;top:437.3px;width:107px;height:30.7px;border-radius:3px;background:#1f9b46;box-shadow:0 1px 2px rgba(0,0,0,.25)"></div>
<svg class="a" style="left:1427.5px;top:445.5px" width="13" height="13" viewBox="0 0 13 13"><path d="M11 5 A5 5 0 0 0 2 3.5 M2 8 A5 5 0 0 0 11 9.5" fill="none" stroke="#fff" stroke-width="1.8"/><path d="M12.5 0.5 V5.5 H7.5Z M0.5 12.5 V7.5 H5.5Z" fill="#fff"/></svg>
<div class="a" style="left:1445px;top:446.36px;font-size:12px;color:#fff;font-weight:400;font-size:12.2px">Rescore</div>
<div class="card" style="left:767px;top:538px;width:848.5px;height:320px"></div>
<div class="a" style="left:782.7px;top:548.0px;font-size:12.5px;color:#2b2b2b;font-weight:400;letter-spacing:-0.15px">Summary</div>
<div class="a" style="left:782px;top:591px;width:819px;height:1px;background:#cfcfcf"></div>
<div class="a" style="left:782px;top:591px;width:1px;height:240px;background:#cfcfcf"></div>
<div class="a" style="left:782px;top:635px;width:819px;height:1px;background:#c4c4c4"></div>
<svg class="a" style="left:796px;top:601px" width="23" height="24" viewBox="0 0 23 24"><defs><linearGradient id="sg" x1="1" y1="0" x2="0" y2="1"><stop offset="0" stop-color="#f27a1f"/><stop offset="0.5" stop-color="#d0822c"/><stop offset="1" stop-color="#6e9a22"/></linearGradient><linearGradient id="sg2" x1="1" y1="0" x2="0" y2="1"><stop offset="0" stop-color="#7a6ad8"/><stop offset="1" stop-color="#e8822a"/></linearGradient></defs><path d="M9.7 5 Q11.3 12.3 17.8 13.9 Q11.3 15.5 9.7 22.4 Q8.1 15.5 0.8 13.9 Q8.1 12.3 9.7 5Z" fill="url(#sg)"/><path d="M17.7 1.8 Q18.5 5.2 21.9 6 Q18.5 6.8 17.7 10.2 Q16.9 6.8 13.5 6 Q16.9 5.2 17.7 1.8Z" fill="url(#sg2)"/></svg>
<div class="a" style="left:828.2px;top:599.3px;width:95.5px;height:28.5px;border:1px solid #c9c9c9;background:#fff"></div>
<div class="a" style="left:836.8px;top:606.98px;font-size:11px;color:#333;font-weight:400;font-family:'Liberation Serif',serif;font-size:11.5px">Format</div>
<svg class="a" style="left:906px;top:610.7px" width="8" height="5" viewBox="0 0 8 5"><path d="M0 0 H8 L4 5Z" fill="#222"/></svg>
<div class="a" style="left:929.2px;top:599.3px;width:129.5px;height:28.5px;border:1px solid #c9c9c9;background:#fff"></div>
<div class="a" style="left:1030.7px;top:599.3px;width:1px;height:28.5px;background:#c9c9c9"></div>
<div class="a" style="left:938px;top:606.98px;font-size:11px;color:#333;font-weight:400;font-family:'Liberation Serif',serif;font-size:11.5px">Font</div>
<svg class="a" style="left:1041.5px;top:610.7px" width="8" height="5" viewBox="0 0 8 5"><path d="M0 0 H8 L4 5Z" fill="#222"/></svg>
<div class="a" style="left:1065px;top:599.3px;width:129.2px;height:28.5px;border:1px solid #c9c9c9;background:#fff"></div>
<div class="a" style="left:1166.4px;top:599.3px;width:1px;height:28.5px;background:#c9c9c9"></div>
<div class="a" style="left:1072.5px;top:606.98px;font-size:11px;color:#333;font-weight:400;font-family:'Liberation Serif',serif;font-size:11.5px">Size</div>
<svg class="a" style="left:1176px;top:610.7px" width="8" height="5" viewBox="0 0 8 5"><path d="M0 0 H8 L4 5Z" fill="#222"/></svg>
<div class="a" style="left:1216.5px;top:607.12px;font-size:11.5px;color:#4a78b6;font-weight:700;">B</div>
<div class="a" style="left:1248px;top:606.2px;font-size:12.5px;color:#4a78b6;font-weight:700;font-family:'Liberation Serif',serif;font-style:italic">I</div>
<div class="a" style="left:1279px;top:606.88px;font-size:11px;color:#4a78b6;font-weight:700;">U</div>
<div class="a" style="left:1279px;top:618.5px;width:8px;height:1px;background:#4a78b6"></div>
<div class="a" style="left:1307px;top:609.02px;font-size:9px;color:#4a78b6;font-weight:400;letter-spacing:-0.3px">abc</div>
<div class="a" style="left:1307px;top:614px;width:14.5px;height:1px;background:#4a78b6"></div>
<div class="a" style="left:1336.3px;top:599.3px;width:50.6px;height:28.5px;border:1px solid #c9c9c9;background:#fff"></div>
<div class="a" style="left:1359.5px;top:599.3px;width:1px;height:28.5px;background:#c9c9c9"></div>
<svg class="a" style="left:1369.5px;top:610.7px" width="8" height="5" viewBox="0 0 8 5"><path d="M0 0 H8 L4 5Z" fill="#222"/></svg>
<div class="a" style="left:1342.8px;top:607.5px;font-size:12.5px;color:#111;font-weight:700;">A</div>
<div class="a" style="left:1392.6px;top:599.3px;width:51.9px;height:28.5px;border:1px solid #c9c9c9;background:#fff"></div>
<div class="a" style="left:1416.8px;top:599.3px;width:1px;height:28.5px;background:#c9c9c9"></div>
<svg class="a" style="left:1427px;top:610.7px" width="8" height="5" viewBox="0 0 8 5"><path d="M0 0 H8 L4 5Z" fill="#222"/></svg>
<svg class="a" style="left:1400px;top:607px" width="10" height="13" viewBox="0 0 10 13"><path d="M5 0.8 C5 0.8 1 5.5 1 8.3 C1 10.6 2.8 12.2 5 12.2 C7.2 12.2 9 10.6 9 8.3 C9 5.5 5 0.8 5 0.8Z" fill="none" stroke="#222" stroke-width="1"/><path d="M2.8 8.5 C2.8 9.6 3.5 10.3 4.3 10.5" fill="none" stroke="#222" stroke-width="0.8"/></svg>
<svg class="a" style="left:1465px;top:608px" width="11" height="11" viewBox="0 0 11 11"><rect x="0" y="0.0" width="11" height="1.1" fill="#5b86c4"/><rect x="0" y="2.2" width="8" height="1.1" fill="#5b86c4"/><rect x="0" y="4.4" width="11" height="1.1" fill="#5b86c4"/><rect x="0" y="6.6000000000000005" width="8" height="1.1" fill="#5b86c4"/><rect x="0" y="8.8" width="11" height="1.1" fill="#5b86c4"/></svg>
<svg class="a" style="left:1497.3px;top:608px" width="11" height="11" viewBox="0 0 11 11"><rect x="0.0" y="0.0" width="11" height="1.1" fill="#5b86c4"/><rect x="1.5" y="2.2" width="8" height="1.1" fill="#5b86c4"/><rect x="0.0" y="4.4" width="11" height="1.1" fill="#5b86c4"/><rect x="1.5" y="6.6000000000000005" width="8" height="1.1" fill="#5b86c4"/><rect x="0.0" y="8.8" width="11" height="1.1" fill="#5b86c4"/></svg>
<svg class="a" style="left:1528.2px;top:608px" width="11" height="11" viewBox="0 0 11 11"><rect x="0" y="0.0" width="11" height="1.1" fill="#5b86c4"/><rect x="3" y="2.2" width="8" height="1.1" fill="#5b86c4"/><rect x="0" y="4.4" width="11" height="1.1" fill="#5b86c4"/><rect x="3" y="6.6000000000000005" width="8" height="1.1" fill="#5b86c4"/><rect x="0" y="8.8" width="11" height="1.1" fill="#5b86c4"/></svg>
<svg class="a" style="left:1578.5px;top:607px" width="3" height="12" viewBox="0 0 3 12"><circle cx="1.5" cy="1.5" r="1.3" fill="#4a78b6"/><circle cx="1.5" cy="6" r="1.3" fill="#4a78b6"/><circle cx="1.5" cy="10.5" r="1.3" fill="#4a78b6"/></svg>
<div class="a" style="left:787.6px;top:652.1px;font-size:12.5px;color:#111;font-weight:700;letter-spacing:0.75px;-webkit-text-stroke:0.2px #111">Resume Fit Analysis:</div>
<div class="a" style="left:787.6px;top:678.88px;font-size:11px;color:#1a1a1a;font-weight:400;letter-spacing:0.420px;-webkit-text-stroke:0.15px #1a1a1a">1. Candidate possesses strong technical skills in .Net Core, Angular, and cloud platforms like Azure, which are directly relevant to the role.</div>
<div class="a" style="left:787.6px;top:702.43px;font-size:11px;color:#1a1a1a;font-weight:400;letter-spacing:0.443px;-webkit-text-stroke:0.15px #1a1a1a">2. Significant experience in backend development, API design, and database optimization aligns well with job requirements.</div>
<div class="a" style="left:787.6px;top:725.98px;font-size:11px;color:#1a1a1a;font-weight:400;letter-spacing:0.472px;-webkit-text-stroke:0.15px #1a1a1a">3. Majority of projects listed involve similar technologies and full-stack development, demonstrating relevant industry expertise.</div>
<div class="a" style="left:787.6px;top:749.53px;font-size:11px;color:#1a1a1a;font-weight:400;letter-spacing:0.414px;-webkit-text-stroke:0.15px #1a1a1a">4. Experience in AWS is noted but lacks exclusive focus on Azure, which may slightly reduce alignment.</div>
<div class="a" style="left:787.6px;top:773.08px;font-size:11px;color:#1a1a1a;font-weight:400;letter-spacing:0.401px;-webkit-text-stroke:0.15px #1a1a1a">5. Certifications in AWS and SAFe practices are helpful but do not directly enhance fit for an Azure-focused backend role.</div>
<svg class="a" style="left:1644px;top:58px" width="22" height="22" viewBox="0 0 22 22" fill="none" stroke="#333" stroke-width="1.15" stroke-linejoin="round"><path d="M6.3 5.2 H13 L14.6 8.5 H17 Q17.8 8.7 17.6 9.6 L16 16 Q15.8 16.6 15 16.6 H8.3 L7.2 13.6 H4.8 Q4 13.5 4.2 12.6 L5.7 5.9 Q5.9 5.2 6.3 5.2Z M12.9 5.4 L10.3 13.5 H7.2 M14.6 8.5 H11.7 L9.1 16.5"/></svg>
<div class="a" style="left:1622px;top:224px;width:6px;height:223px;border-radius:3px;background:#b3b3b3"></div>
<div class="a" style="left:1667px;top:48px;width:1px;height:771px;background:#f4f4f4"></div></div>
<div id="topstrip"></div>
<div id="shade"></div>
<svg style="position:absolute;left:794px;top:805.5px" width="18" height="15" viewBox="0 0 18 15"><rect x="1" y="1" width="15.5" height="13" rx="2.5" fill="none" stroke="#f4f4f4" stroke-width="1.5"/><path d="M8.75 12 V2.8 M5.7 5.8 L8.75 2.7 L11.8 5.8" fill="none" stroke="#f4f4f4" stroke-width="1.3"/></svg>
</body></html>
